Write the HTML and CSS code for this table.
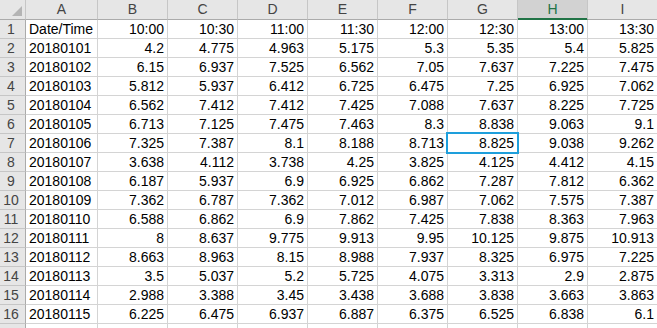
FILE: index.html
```html
<!DOCTYPE html>
<html lang="en">
<head>
    <meta charset="UTF-8" />
    <title>Sheet1</title>
    <link rel="stylesheet" href="styles.css">
</head>
<body>

<table class="sheet">
    <colgroup>
        <col class="col-head">
        <col class="col-a">
        <col class="col-n"><col class="col-n"><col class="col-n"><col class="col-n">
        <col class="col-n"><col class="col-n"><col class="col-n"><col class="col-n">
    </colgroup>
    <thead>
        <tr>
            <th class="corner"><span class="corner-mark"></span></th>
            <th>A</th><th>B</th><th>C</th><th>D</th><th>E</th><th>F</th><th>G</th>
            <th class="active">H</th><th>I</th>
        </tr>
    </thead>
    <tbody>
        <tr><th>1</th><td>Date/Time</td><td>10:00</td><td>10:30</td><td>11:00</td><td>11:30</td><td>12:00</td><td>12:30</td><td>13:00</td><td>13:30</td></tr>
        <tr><th>2</th><td>20180101</td><td>4.2</td><td>4.775</td><td>4.963</td><td>5.175</td><td>5.3</td><td>5.35</td><td>5.4</td><td>5.825</td></tr>
        <tr><th>3</th><td>20180102</td><td>6.15</td><td>6.937</td><td>7.525</td><td>6.562</td><td>7.05</td><td>7.637</td><td>7.225</td><td>7.475</td></tr>
        <tr><th>4</th><td>20180103</td><td>5.812</td><td>5.937</td><td>6.412</td><td>6.725</td><td>6.475</td><td>7.25</td><td>6.925</td><td>7.062</td></tr>
        <tr><th>5</th><td>20180104</td><td>6.562</td><td>7.412</td><td>7.412</td><td>7.425</td><td>7.088</td><td>7.637</td><td>8.225</td><td>7.725</td></tr>
        <tr><th>6</th><td>20180105</td><td>6.713</td><td>7.125</td><td>7.475</td><td>7.463</td><td>8.3</td><td>8.838</td><td>9.063</td><td>9.1</td></tr>
        <tr><th>7</th><td>20180106</td><td>7.325</td><td>7.387</td><td>8.1</td><td>8.188</td><td>8.713</td><td class="selected">8.825</td><td>9.038</td><td>9.262</td></tr>
        <tr><th>8</th><td>20180107</td><td>3.638</td><td>4.112</td><td>3.738</td><td>4.25</td><td>3.825</td><td>4.125</td><td>4.412</td><td>4.15</td></tr>
        <tr><th>9</th><td>20180108</td><td>6.187</td><td>5.937</td><td>6.9</td><td>6.925</td><td>6.862</td><td>7.287</td><td>7.812</td><td>6.362</td></tr>
        <tr><th>10</th><td>20180109</td><td>7.362</td><td>6.787</td><td>7.362</td><td>7.012</td><td>6.987</td><td>7.062</td><td>7.575</td><td>7.387</td></tr>
        <tr><th>11</th><td>20180110</td><td>6.588</td><td>6.862</td><td>6.9</td><td>7.862</td><td>7.425</td><td>7.838</td><td>8.363</td><td>7.963</td></tr>
        <tr><th>12</th><td>20180111</td><td>8</td><td>8.637</td><td>9.775</td><td>9.913</td><td>9.95</td><td>10.125</td><td>9.875</td><td>10.913</td></tr>
        <tr><th>13</th><td>20180112</td><td>8.663</td><td>8.963</td><td>8.15</td><td>8.988</td><td>7.937</td><td>8.325</td><td>6.975</td><td>7.225</td></tr>
        <tr><th>14</th><td>20180113</td><td>3.5</td><td>5.037</td><td>5.2</td><td>5.725</td><td>4.075</td><td>3.313</td><td>2.9</td><td>2.875</td></tr>
        <tr><th>15</th><td>20180114</td><td>2.988</td><td>3.388</td><td>3.45</td><td>3.438</td><td>3.688</td><td>3.838</td><td>3.663</td><td>3.863</td></tr>
        <tr><th>16</th><td>20180115</td><td>6.225</td><td>6.475</td><td>6.937</td><td>6.887</td><td>6.375</td><td>6.525</td><td>6.838</td><td>6.1</td></tr>
        <!-- row 17 only peeks in at the bottom edge -->
        <tr><th></th><td></td><td></td><td></td><td></td><td></td><td></td><td></td><td></td><td></td></tr>
    </tbody>
</table>

</body>
</html>
```

FILE: styles.css
```css
body {
    margin: 0;
    background: #fff;
    overflow: hidden;
    font-family: 'Liberation Sans', Arial, sans-serif;
    font-size: 14px;
    color: #000;
}

.sheet {
    table-layout: fixed;
    width: 658px;
    border-collapse: separate;
    border-spacing: 0;
}

.col-head { width: 26px; }
.col-a { width: 72px; }
.col-n { width: 70px; }

.sheet th,
.sheet td {
    padding: 0 3px;
    height: 18px;
    line-height: 18px;
    white-space: nowrap;
    overflow: hidden;
    border-right: 1px solid #d4d4d4;
    border-bottom: 1px solid #d4d4d4;
}

.sheet td {
    text-align: right;
}

.sheet td:nth-child(2) {
    text-align: left;
}

/* column and row headers */
.sheet th {
    background: #e6e6e6;
    color: #444;
    font-weight: normal;
    text-align: center;
    padding: 0;
    border-right-color: #c6c6c6;
    border-bottom-color: #c6c6c6;
}

.sheet thead th {
    line-height: 19px;
    border-bottom-color: #ababab;
}

.sheet tbody th {
    padding-right: 3px;
    border-right-color: #ababab;
}

.sheet thead th.active {
    background: #d2d2d2;
    color: #217346;
    box-shadow: inset 0 -1px 0 #217346;
    border-bottom-color: #217346;
}

.corner {
    position: relative;
}

.corner-mark {
    position: absolute;
    right: 3px;
    bottom: 3px;
    width: 0;
    height: 0;
    border-left: 10px solid transparent;
    border-bottom: 10px solid #b4b4b4;
}

.sheet td.selected {
    position: relative;
    overflow: visible;
}

.sheet td.selected::after {
    content: "";
    position: absolute;
    top: -2px;
    left: -2px;
    right: -2px;
    bottom: -2px;
    border: 2px solid #1e9fdc;
}
```
